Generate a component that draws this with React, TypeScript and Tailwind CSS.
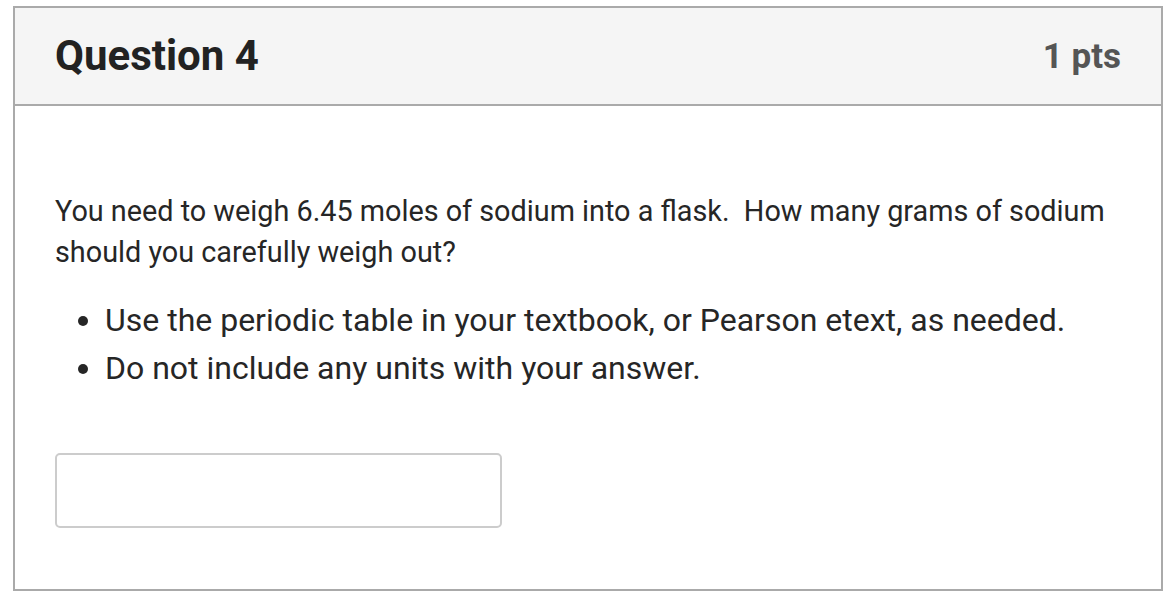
export default function App() {
  return (
    <div className="w-[1170px] h-[610px] bg-white pt-[6px] pl-[13px]" style={{ fontFamily: 'Roboto, "Liberation Sans", sans-serif' }}>
      <div className="w-[1150px] h-[585px] border-2 border-[#aaaaaa] flex flex-col">
        <div className="h-[98px] bg-[#f5f5f5] border-b-2 border-[#aaaaaa] flex items-center justify-between pl-[40px] pr-[40px]">
          <h2 className="text-[42px] font-bold text-[#222222] leading-none">Question 4</h2>
          <span className="text-[35px] font-bold text-[#555555] leading-none">1 pts</span>
        </div>
        <div className="px-[40px] pt-[85px] text-[#262626]">
          <p className="text-[28.8px] leading-[41px]">
            You need to weigh 6.45 moles of sodium into a flask.&nbsp; How many grams of sodium should you carefully weigh out?
          </p>
          <ul className="list-disc pl-[50px] mt-[23px] text-[32px] leading-[48px]">
            <li>Use the periodic table in your textbook, or Pearson etext, as needed.</li>
            <li>Do not include any units with your answer.</li>
          </ul>
          <input
            type="text"
            className="mt-[61px] block w-[447px] h-[75px] border-2 border-[#cccccc] rounded-[5px] bg-white outline-none"
          />
        </div>
      </div>
    </div>
  );
}
